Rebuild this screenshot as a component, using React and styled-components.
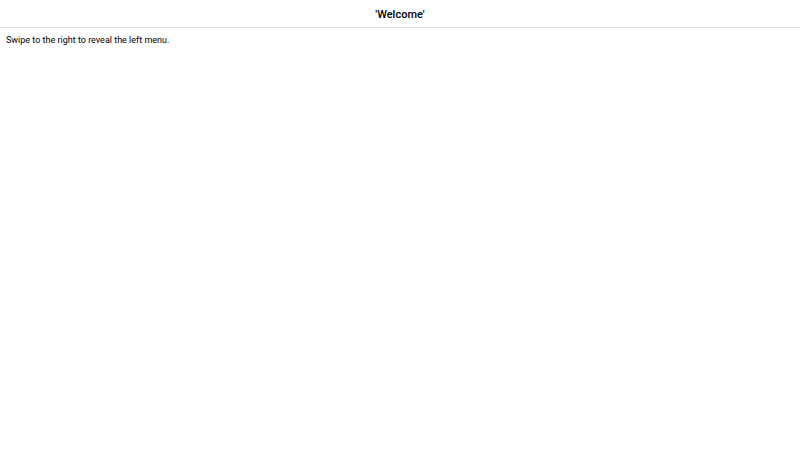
import React from 'react';
import styled, { createGlobalStyle } from 'styled-components';

const GlobalStyle = createGlobalStyle`
  body {
    margin: 0;
    background: #fff;
    color: #000;
    font-family: Roboto, sans-serif;
  }
`;

const Header = styled.header`
  padding: 8px 6px 6px;
  border-bottom: 1px solid #dedede;
  text-align: center;
`;

const Title = styled.h1`
  margin: 0;
  font-size: 11px;
  font-weight: 500;
  line-height: 13px;
`;

const Content = styled.main`
  padding: 6px;
`;

const Text = styled.p`
  margin: 0;
  font-size: 9px;
  line-height: 13px;
`;

function App() {
  return (
    <>
      <GlobalStyle />
      <Header>
        <Title>'Welcome'</Title>
      </Header>
      <Content>
        <Text>Swipe to the right to reveal the left menu.</Text>
      </Content>
    </>
  );
}

export default App;
